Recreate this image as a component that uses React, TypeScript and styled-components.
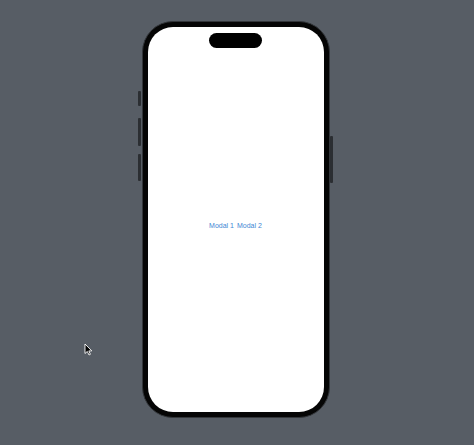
import React from "react";
import styled, { createGlobalStyle } from "styled-components";

const Global = createGlobalStyle`
  html, body { margin: 0; padding: 0; }
  body {
    background: #575d65;
    width: 474px;
    height: 445px;
    overflow: hidden;
    font-family: "Liberation Sans", Arial, sans-serif;
  }
`;

const Stage = styled.div`
  position: relative;
  width: 474px;
  height: 445px;
  display: flex;
  justify-content: center;
  padding-top: 21px;
  padding-right: 3px;
  box-sizing: border-box;
`;

const Phone = styled.div`
  position: relative;
  width: 188px;
  height: 397px;
  box-sizing: border-box;
  border-radius: 31px;
  background: #050505;
  border: 1px solid #33363a;
  padding: 5px;
  display: flex;
`;

const Screen = styled.div`
  flex: 1;
  background: #ffffff;
  border-radius: 25px;
  display: flex;
  flex-direction: column;
  align-items: center;
  padding-top: 6px;
`;

const Island = styled.div`
  width: 53px;
  height: 15px;
  border-radius: 8px;
  background: #000;
`;

const Content = styled.div`
  flex: 1;
  display: flex;
  align-items: center;
  justify-content: center;
  gap: 3px;
  padding-bottom: 10px;
`;

const LinkButton = styled.button`
  background: none;
  border: none;
  padding: 0;
  font-family: "Liberation Sans", Arial, sans-serif;
  font-size: 7px;
  color: #4086d4;
  cursor: pointer;
`;

const SideButton = styled.div<{ $side: "left" | "right"; $top: number; $h: number }>`
  position: absolute;
  ${(p) => (p.$side === "left" ? "left: -5px;" : "right: -4px;")}
  top: ${(p) => p.$top}px;
  width: 3px;
  height: ${(p) => p.$h}px;
  background: #2b2e32;
  border-radius: 1px;
`;

const Cursor = styled.svg`
  position: absolute;
  left: 84px;
  top: 343px;
`;

export default function App() {
  return (
    <>
      <Global />
      <Stage>
        <Phone>
          <SideButton $side="left" $top={69} $h={15} />
          <SideButton $side="left" $top={96} $h={28} />
          <SideButton $side="left" $top={132} $h={27} />
          <SideButton $side="right" $top={114} $h={47} />
          <Screen>
            <Island />
            <Content>
              <LinkButton>Modal 1</LinkButton>
              <LinkButton>Modal 2</LinkButton>
            </Content>
          </Screen>
        </Phone>
        <Cursor width="9" height="13" viewBox="0 0 9 13">
          <path d="M1 1 L1 10.5 L3.3 8.4 L5 12 L6.4 11.3 L4.8 7.9 L7.8 7.9 Z" fill="#000" stroke="#fff" strokeWidth="0.9" strokeLinejoin="round" />
        </Cursor>
      </Stage>
    </>
  );
}
